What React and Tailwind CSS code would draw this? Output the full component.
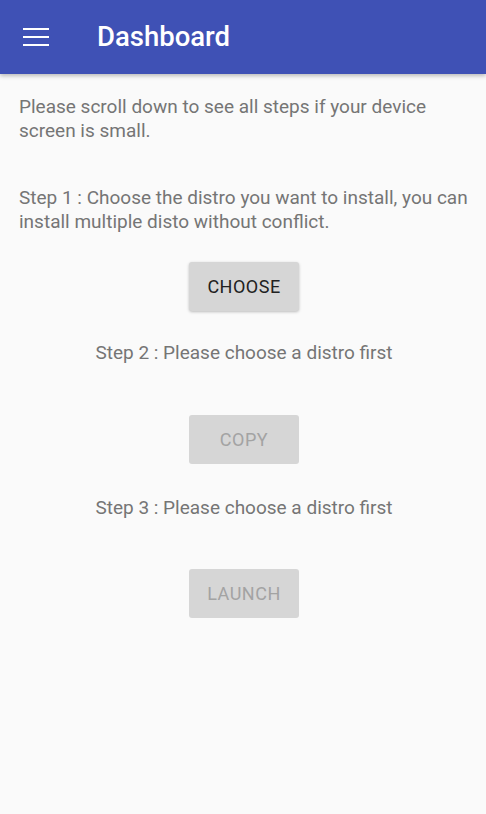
import React from 'react';

const Step = ({ text, label, disabled, gapTop, gapBtn }) => (
    <div className="flex flex-col items-center">
        <p className={`${gapTop} text-[19px] leading-[24px] text-[#757575] text-center`}>{text}</p>
        <button
            disabled={disabled}
            className={`${gapBtn} w-[110px] h-[49px] rounded-[3px] bg-[#d6d6d6] text-[18px] tracking-[0.5px] ${disabled ? 'text-[#a3a3a3]' : 'text-[#212121] shadow-[0_1px_3px_rgba(0,0,0,0.25)]'}`}
        >
            {label}
        </button>
    </div>
);

const App = () => {
    return (
        <div className="min-h-[814px] bg-[#fafafa]" style={{ fontFamily: 'Roboto, "Noto Sans", sans-serif' }}>
            <header className="h-[74px] bg-[#3f51b5] flex items-center shadow-[0_2px_4px_rgba(0,0,0,0.25)] relative">
                <div className="ml-[23px] w-[26px] flex flex-col gap-[5.5px]">
                    <span className="block h-[2.5px] bg-white"></span>
                    <span className="block h-[2.5px] bg-white"></span>
                    <span className="block h-[2.5px] bg-white"></span>
                </div>
                <h1 className="ml-[48px] text-white text-[27.5px] font-medium">Dashboard</h1>
            </header>

            <div className="pl-[19px] pr-[12px]">
                <p className="pt-[21px] text-[19px] leading-[24px] text-[#757575]">
                    Please scroll down to see all steps if your device screen is small.
                </p>
                <p className="mt-[43px] text-[19px] leading-[24px] text-[#757575]">
                    Step 1 : Choose the distro you want to install, you can install multiple disto without conflict.
                </p>
            </div>
            <div className="pl-[2px]">
                <div className="flex flex-col items-center">
                    <button className="mt-[28px] w-[110px] h-[49px] rounded-[3px] bg-[#d6d6d6] text-[18px] tracking-[0.5px] text-[#212121] shadow-[0_1px_3px_rgba(0,0,0,0.25)]">
                        CHOOSE
                    </button>
                </div>
                <Step text="Step 2 : Please choose a distro first" label="COPY" disabled gapTop="mt-[30px]" gapBtn="mt-[50px]" />
                <Step text="Step 3 : Please choose a distro first" label="LAUNCH" disabled gapTop="mt-[32px]" gapBtn="mt-[49px]" />
            </div>
        </div>
    );
};

export default App;
